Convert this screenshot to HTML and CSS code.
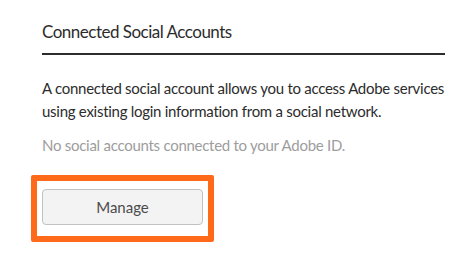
FILE: index.html
```html
<!DOCTYPE html>
<html>
<head>
    <link rel="stylesheet" href="styles.css">
</head>
<body>
    <div class="section">
        <h2 class="section-title">Connected Social Accounts</h2>
        <p class="description">A connected social account allows you to access Adobe services using existing login information from a social network.</p>
        <p class="empty-note">No social accounts connected to your Adobe ID.</p>
        <div class="highlight">
            <button class="manage-btn">Manage</button>
        </div>
    </div>
</body>
</html>
```

FILE: styles.css
```css
body {
    margin: 0;
    font-family: 'Lato', sans-serif;
    background: #ffffff;
    color: #2c2c2c;
}

.section {
    width: 403px;
    padding: 21px 0 0 42px;
}

.section-title {
    font-size: 17px;
    font-weight: 400;
    line-height: 22px;
    letter-spacing: -0.5px;
    margin: 0;
    padding-bottom: 10px;
    border-bottom: 2px solid #2c2c2c;
}

.description {
    font-size: 15px;
    line-height: 23px;
    letter-spacing: -0.27px;
    margin: 22px 0 0;
}

.empty-note {
    font-size: 15px;
    line-height: 23px;
    letter-spacing: -0.27px;
    color: #9d9d9d;
    margin: 11px 0 0;
}

.highlight {
    display: inline-block;
    margin: 18px 0 0 -11px;
    padding: 8px 5px 11px 5px;
    border: 6px solid #ff6a1a;
    border-radius: 2px;
}

.manage-btn {
    display: block;
    width: 161px;
    height: 36px;
    padding: 0;
    font-family: inherit;
    font-size: 15px;
    color: #4b4b4b;
    background: #f3f3f3;
    border: 1px solid #c2c2c2;
    border-radius: 4px;
}
```
